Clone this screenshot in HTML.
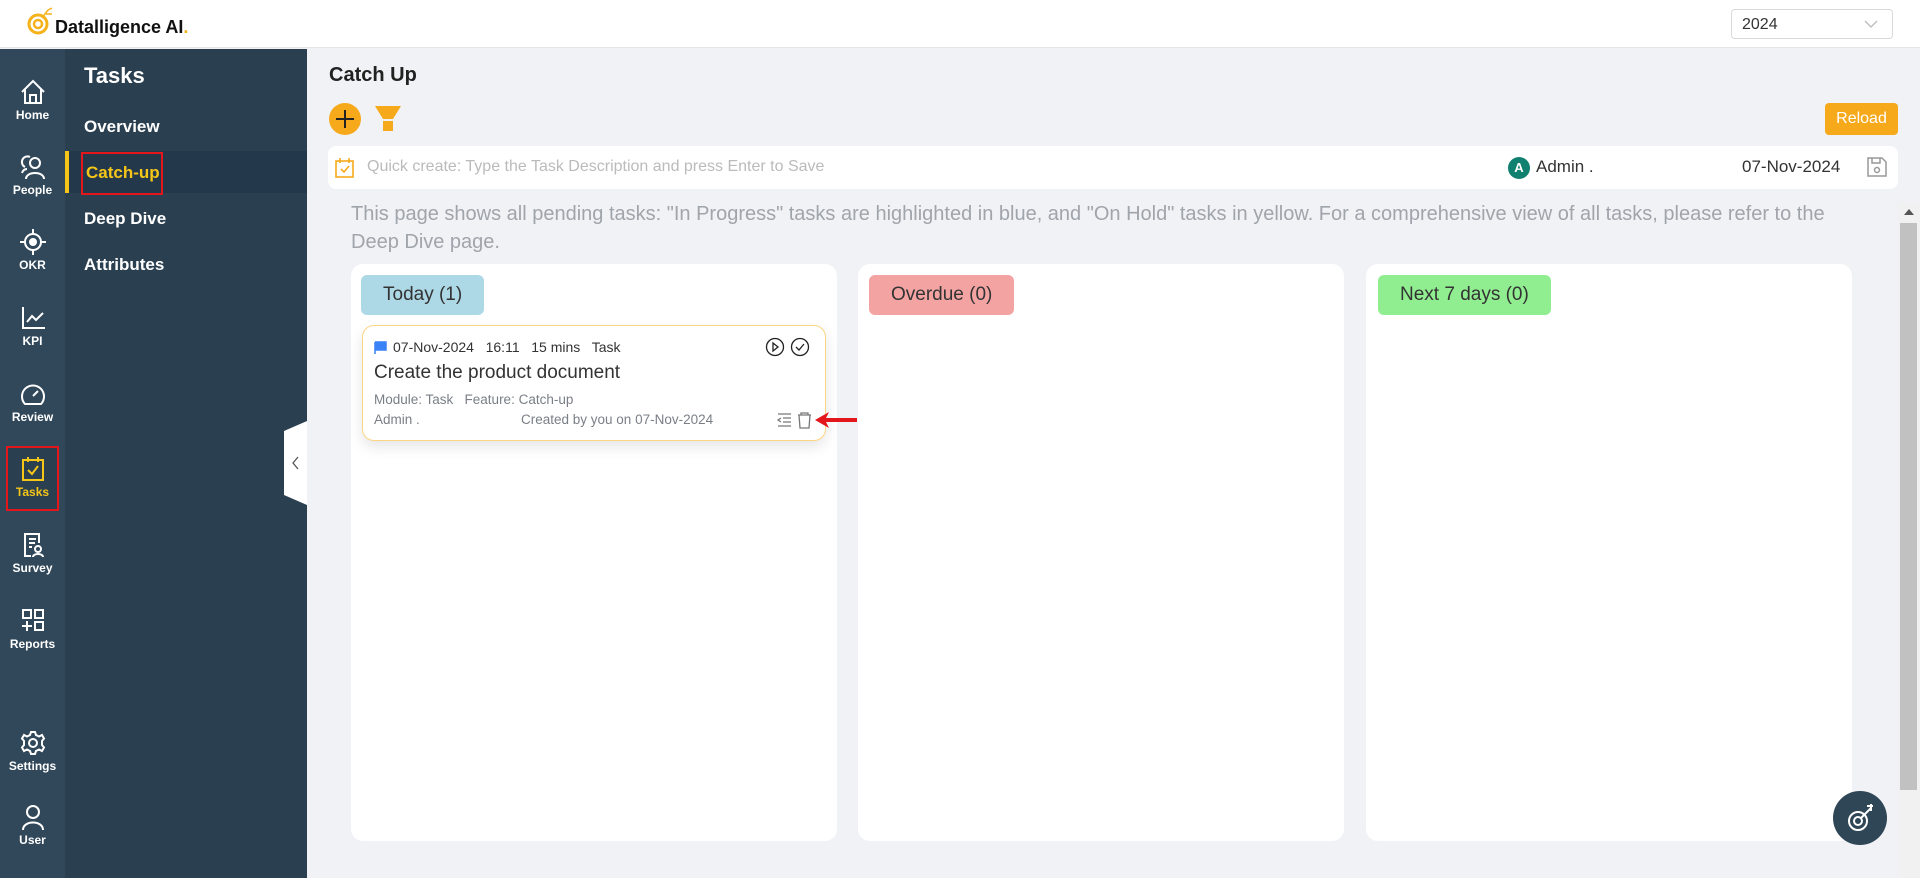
<!DOCTYPE html>
<html><head><meta charset="utf-8"><style>
*{box-sizing:border-box;margin:0;padding:0}
body{width:1920px;height:878px;overflow:hidden;background:#f0f2f5;font-family:"Liberation Sans",sans-serif;position:relative}
.abs{position:absolute}
.hdr{left:0;top:0;width:1920px;height:48px;background:#fff;border-bottom:1px solid #e3e5e8}
.rail{left:0;top:49px;width:65px;height:829px;background:#31485a}
.sub{left:65px;top:49px;width:242px;height:829px;background:#2a3f50}
.ri{position:absolute;left:0;width:65px;text-align:center;color:#fff;font-size:12px;font-weight:bold}
.ri svg{display:block;margin:0 auto 2px}
.sm{position:absolute;left:84px;color:#fff;font-size:17px;font-weight:bold}
.col{background:#fff;border-radius:12px;top:264px;height:577px;width:486px}
.badge{position:absolute;top:11px;height:40px;border-radius:6px;font-size:19px;color:#333;line-height:40px;padding:0 22px}
</style></head><body>
<div class="abs hdr"></div>
<svg class="abs" style="left:26px;top:6px" width="34" height="30" viewBox="0 0 34 30"><circle cx="12" cy="18" r="9" fill="none" stroke="#f5b21b" stroke-width="3"/><circle cx="12" cy="18" r="4" fill="none" stroke="#f5b21b" stroke-width="2.5"/><path d="M16 12 L22 4 M20 8 L26 8 M22 4 L26 2" stroke="#f5b21b" stroke-width="1.5" fill="none"/></svg>
<div class="abs" style="left:55px;top:17px;font-size:18px;font-weight:bold;color:#111">Datalligence AI<span style="color:#f5b21b">.</span></div>
<div class="abs" style="left:1731px;top:9px;width:162px;height:30px;border:1px solid #d9d9d9;border-radius:4px;background:#fff;font-size:16px;color:#333;padding:6px 10px">2024<svg style="position:absolute;right:14px;top:10px" width="14" height="9"><path d="M1 1 L7 7 L13 1" stroke="#bbb" fill="none" stroke-width="1.3"/></svg></div>

<div class="abs rail"></div>
<div class="abs sub"></div>
<div class="ri" style="top:78px"><svg width="28" height="28" viewBox="0 0 28 28" fill="none" stroke="#fff" stroke-width="2"><path d="M3 14 L14 3 L25 14 M6 11 V25 H22 V11 M11 25 V17 H17 V25"/></svg>Home</div>
<div class="ri" style="top:153px"><svg width="28" height="28" viewBox="0 0 28 28" fill="none" stroke="#fff" stroke-width="2"><circle cx="16" cy="10" r="5"/><path d="M7 26 C7 18 25 18 25 26 M11 4 A5 5 0 0 0 6 14 M3 20 C4 17 6 16 8 16"/></svg>People</div>
<div class="ri" style="top:228px"><svg width="28" height="28" viewBox="0 0 28 28" fill="none" stroke="#fff" stroke-width="2"><circle cx="14" cy="14" r="8"/><circle cx="14" cy="14" r="3" fill="#fff"/><path d="M14 1 V6 M14 22 V27 M1 14 H6 M22 14 H27"/></svg>OKR</div>
<div class="ri" style="top:304px"><svg width="28" height="28" viewBox="0 0 28 28" fill="none" stroke="#fff" stroke-width="2"><path d="M4 3 V24 H26 M8 18 L13 12 L17 16 L24 9"/></svg>KPI</div>
<div class="ri" style="top:380px"><svg width="28" height="28" viewBox="0 0 28 28" fill="none" stroke="#fff" stroke-width="2"><path d="M6 24 A11 11 0 1 1 22 24 Z M14 16 L19 11"/></svg>Review</div>
<div class="abs" style="left:6px;top:446px;width:53px;height:65px;border:2px solid #e3161c;background:#2a3f50"></div>
<div class="ri" style="top:455px;color:#f5c518"><svg width="28" height="28" viewBox="0 0 28 28" fill="none" stroke="#f5c518" stroke-width="2"><rect x="4" y="5" width="20" height="20"/><path d="M9 2 V7 M19 2 V7 M9 15 L13 19 L19 11"/></svg>Tasks</div>
<div class="ri" style="top:531px"><svg width="28" height="28" viewBox="0 0 28 28" fill="none" stroke="#fff" stroke-width="2"><path d="M20 12 V3 H6 V25 H12 M10 8 H17 M10 12 H16 M10 16 H13"/><circle cx="19" cy="18" r="3"/><path d="M14 26 C14 22 24 22 24 26"/></svg>Survey</div>
<div class="ri" style="top:607px"><svg width="28" height="28" viewBox="0 0 28 28" fill="none" stroke="#fff" stroke-width="2"><rect x="4" y="3" width="8" height="8"/><rect x="16" y="3" width="8" height="8"/><rect x="16" y="15" width="8" height="8"/><path d="M8 14 V24 M3 19 H13"/></svg>Reports</div>
<div class="ri" style="top:729px"><svg width="28" height="28" viewBox="0 0 28 28" fill="none" stroke="#fff" stroke-width="2"><circle cx="14" cy="14" r="4"/><path d="M12 3 H16 L17 6 L20 7.5 L23 6 L25 9.5 L23 12 V16 L25 18.5 L23 22 L20 20.5 L17 22 L16 25 H12 L11 22 L8 20.5 L5 22 L3 18.5 L5 16 V12 L3 9.5 L5 6 L8 7.5 L11 6 Z"/></svg>Settings</div>
<div class="ri" style="top:803px"><svg width="28" height="28" viewBox="0 0 28 28" fill="none" stroke="#fff" stroke-width="2"><circle cx="14" cy="9" r="6"/><path d="M4 27 C4 17 24 17 24 27"/></svg>User</div>

<div class="sm" style="top:63px;font-size:22px">Tasks</div>
<div class="abs" style="left:65px;top:151px;width:242px;height:42px;background:#23384a"></div>
<div class="abs" style="left:65px;top:151px;width:4px;height:42px;background:#f5c518"></div>
<div class="sm" style="top:117px">Overview</div>
<div class="abs" style="left:81px;top:152px;width:82px;height:43px;border:2px solid #e3161c"></div>
<div class="sm" style="top:163px;left:86px;color:#f5c518">Catch-up</div>
<div class="sm" style="top:209px">Deep Dive</div>
<div class="sm" style="top:255px">Attributes</div>
<svg class="abs" style="left:284px;top:421px" width="23" height="84"><path d="M23 0 L0 10 V74 L23 84 Z" fill="#fff"/><path d="M14 36 L9 42 L14 48" stroke="#555" fill="none" stroke-width="1.3"/></svg>

<div class="abs" style="left:329px;top:64px;font-size:20px;font-weight:bold;color:#222">Catch Up</div>
<svg class="abs" style="left:328px;top:102px" width="34" height="34"><circle cx="17" cy="17" r="16" fill="#f6a91b"/><path d="M17 8 V26 M8 17 H26" stroke="#222" stroke-width="2"/></svg>
<svg class="abs" style="left:373px;top:105px" width="30" height="28"><path d="M2 1 H28 L20 14 H10 Z" fill="#f6a91b"/><rect x="10" y="16" width="10" height="10" fill="#f6a91b"/></svg>
<div class="abs" style="left:1825px;top:103px;width:73px;height:32px;background:#f6a91b;border-radius:4px;color:#fff;font-size:16px;text-align:center;line-height:32px">Reload</div>
<div class="abs" style="left:328px;top:146px;width:1570px;height:43px;background:#fff;border-radius:8px"></div>
<svg class="abs" style="left:335px;top:157px" width="20" height="22" fill="none" stroke="#f6a91b" stroke-width="1.6"><rect x="1" y="4" width="17" height="16"/><path d="M5 1 V6 M14 1 V6 M6 12 L9 15 L14 9"/></svg>
<div class="abs" style="left:367px;top:158px;font-size:16px;color:#bbb">Quick create: Type the Task Description and press Enter to Save</div>
<div class="abs" style="left:1508px;top:157px;width:22px;height:22px;border-radius:50%;background:#108070;color:#fff;font-size:13px;font-weight:bold;text-align:center;line-height:22px">A</div>
<div class="abs" style="left:1536px;top:157px;font-size:17px;color:#333">Admin .</div>
<div class="abs" style="left:1742px;top:157px;font-size:17px;color:#333">07-Nov-2024</div>
<svg class="abs" style="left:1866px;top:156px" width="22" height="22" fill="none" stroke="#999" stroke-width="1.5"><path d="M2 2 H16 L20 6 V20 H2 Z M6 2 V7 H14 V2"/><circle cx="11" cy="14" r="2.5"/></svg>
<div class="abs" style="left:351px;top:200px;width:1500px;font-size:20px;line-height:28px;color:#a0a4ab">This page shows all pending tasks: "In Progress" tasks are highlighted in blue, and "On Hold" tasks in yellow. For a comprehensive view of all tasks, please refer to the Deep Dive page.</div>

<div class="abs col" style="left:351px"><div class="badge" style="left:10px;background:#add8e6">Today (1)</div></div>
<div class="abs col" style="left:858px"><div class="badge" style="left:11px;background:#f4a3a3">Overdue (0)</div></div>
<div class="abs col" style="left:1366px"><div class="badge" style="left:12px;background:#90ee90">Next 7 days (0)</div></div>

<div class="abs" style="left:362px;top:325px;width:464px;height:116px;border:1px solid #fcd581;border-radius:12px;background:#fff;box-shadow:0 6px 14px rgba(0,0,0,.1)"></div>
<svg class="abs" style="left:374px;top:341px" width="13" height="13"><path d="M1 1 V13 M1 1 H12 V9 H1" fill="#3b82f6" stroke="#3b82f6" stroke-width="1.5"/></svg>
<div class="abs" style="left:393px;top:339px;font-size:14px;color:#333">07-Nov-2024 &nbsp; 16:11 &nbsp; 15 mins &nbsp; Task</div>
<svg class="abs" style="left:765px;top:337px" width="46" height="20" fill="none" stroke="#222" stroke-width="1.3"><circle cx="10" cy="10" r="8.5"/><path d="M8 6 L13 10 L8 14 Z"/><circle cx="35" cy="10" r="8.5"/><path d="M31 10 L34 13 L39 7"/></svg>
<div class="abs" style="left:374px;top:362px;font-size:19px;color:#333">Create the product document</div>
<div class="abs" style="left:374px;top:392px;font-size:13.5px;color:#7a7f87">Module: Task &nbsp; Feature: Catch-up</div>
<div class="abs" style="left:374px;top:412px;font-size:13.5px;color:#7a7f87">Admin .</div>
<div class="abs" style="left:521px;top:412px;font-size:13.5px;color:#7a7f87">Created by you on 07-Nov-2024</div>
<svg class="abs" style="left:777px;top:411px" width="36" height="18" fill="none" stroke="#777" stroke-width="1.3"><path d="M1 3 H14 M6 7 H14 M6 11 H14 M1 15 H14 M4 7 L1 9 L4 11"/><path d="M21 4 H34 M24 4 V2 H31 V4 M22 4 L23 17 H32 L33 4"/></svg>
<svg class="abs" style="left:815px;top:410px" width="42" height="20"><path d="M0 10 L14 2 L11 8 L42 8 L42 12 L11 12 L14 18 Z" fill="#e3161c"/></svg>

<div class="abs" style="left:1898px;top:202px;width:22px;height:676px;background:#f1f1f1"></div>
<svg class="abs" style="left:1904px;top:208px" width="10" height="8"><path d="M0 7 L5 1 L10 7 Z" fill="#555"/></svg>
<div class="abs" style="left:1900px;top:223px;width:17px;height:567px;background:#c1c1c1"></div>
<div class="abs" style="left:1833px;top:791px;width:54px;height:54px;border-radius:50%;background:#2f4656"></div>
<svg class="abs" style="left:1845px;top:802px" width="32" height="32" fill="none" stroke="#fff" stroke-width="2"><circle cx="13" cy="19" r="9"/><circle cx="13" cy="19" r="4"/><path d="M16 16 L26 6 M22 4 L28 4 M26 2 L26 9"/></svg>
</body></html>
